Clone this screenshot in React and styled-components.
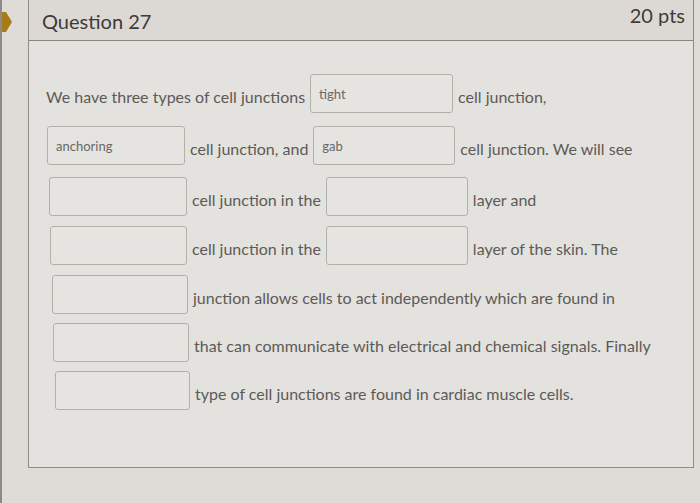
import React from 'react';
import styled, { createGlobalStyle } from 'styled-components';

const GlobalStyle = createGlobalStyle`
  html, body {
    margin: 0;
    padding: 0;
    background: #dedbd6;
  }
  body {
    font-family: Lato, 'Open Sans', sans-serif;
  }
`;

const Page = styled.div`
  display: flex;
  width: 700px;
  height: 503px;
  overflow: hidden;
  background: #dfdcd7;
  border-left: 2px solid #8e8a85;
  box-sizing: border-box;
`;

const Gutter = styled.div`
  width: 26px;
  flex: none;
  padding-top: 12px;
  box-sizing: border-box;
`;

const Question = styled.div`
  width: 666px;
  height: 468px;
  display: flex;
  flex-direction: column;
  border-left: 1px solid #8f8b86;
  border-right: 1px solid #8f8b86;
  border-bottom: 1px solid #8f8b86;
  box-sizing: border-box;
  background: #e4e2de;
`;

const Header = styled.div`
  height: 41px;
  display: flex;
  align-items: center;
  justify-content: space-between;
  padding: 0 8px 0 13px;
  border-bottom: 1px solid #8a8681;
  background: #dcd9d4;
  color: #3d3b39;
  box-sizing: border-box;
`;

const Title = styled.div`
  font-size: 20px;
  padding-top: 2px;
`;

const Points = styled.div`
  font-size: 20px;
  padding-bottom: 10px;
`;

const Body = styled.div`
  flex: 1;
  padding: 26px 0 0 17px;
  display: flex;
  flex-direction: column;
`;

const Line = styled.div`
  height: ${p => p.$h || 50}px;
  display: flex;
  align-items: center;
  gap: 5px;
  padding-left: ${p => p.$indent || 0}px;
`;

const Text = styled.span`
  font-size: 16px;
  color: #5c5a57;
  padding-top: 6px;
  white-space: nowrap;
`;

const Blank = styled.div`
  width: ${p => p.$w}px;
  height: 39px;
  flex: none;
  border: 1px solid #b3afa9;
  border-radius: 3px;
  background: #e6e4e0;
  box-sizing: border-box;
  padding: 11px 0 0 8px;
  font-size: 13px;
  color: #6a6865;
`;

function Marker() {
  return (
    <svg width="10" height="20" viewBox="0 0 10 20">
      <polygon points="-6,0 4,0 10,10 4,20 -6,20" fill="#a97a16" />
    </svg>
  );
}

export default function App() {
  return (
    <>
      <GlobalStyle />
      <Page>
        <Gutter>
          <Marker />
        </Gutter>
        <Question>
          <Header>
            <Title>Question 27</Title>
            <Points>20 pts</Points>
          </Header>
          <Body>
            <Line $h={52}>
              <Text>We have three types of cell junctions</Text>
              <Blank $w={143}>tight</Blank>
              <Text>cell junction,</Text>
            </Line>
            <Line $indent={1} $h={52}>
              <Blank $w={138}>anchoring</Blank>
              <Text>cell junction, and</Text>
              <Blank $w={142}>gab</Blank>
              <Text>cell junction. We will see</Text>
            </Line>
            <Line $indent={3}>
              <Blank $w={138} />
              <Text>cell junction in the</Text>
              <Blank $w={142} />
              <Text>layer and</Text>
            </Line>
            <Line $indent={4} $h={49}>
              <Blank $w={137} />
              <Text>cell junction in the</Text>
              <Blank $w={142} />
              <Text>layer of the skin. The</Text>
            </Line>
            <Line $indent={6} $h={48}>
              <Blank $w={136} />
              <Text>junction allows cells to act independently which are found in</Text>
            </Line>
            <Line $indent={7} $h={48}>
              <Blank $w={136} />
              <Text>that can communicate with electrical and chemical signals. Finally</Text>
            </Line>
            <Line $indent={9} $h={48}>
              <Blank $w={135} />
              <Text>type of cell junctions are found in cardiac muscle cells.</Text>
            </Line>
          </Body>
        </Question>
      </Page>
    </>
  );
}
